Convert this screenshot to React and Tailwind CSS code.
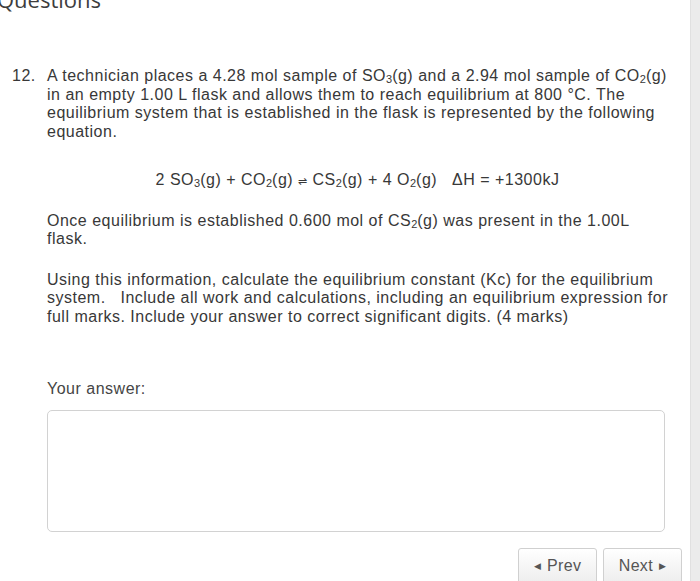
import React from "react";

function Sub({ children }) {
  return <sub className="text-[11px] leading-none relative top-[2px] align-baseline tracking-normal">{children}</sub>;
}

export default function App() {
  return (
    <div className="w-[700px] h-[581px] overflow-hidden bg-white flex font-['Liberation_Sans',Arial,sans-serif] text-[#383838]">
      <div className="flex-1 flex flex-col">
        <h1 className="-mt-[16px] -ml-[3px] font-['Open_Sans',sans-serif] text-[22px] leading-[30px] text-[#3d3d3d]">Questions</h1>
        <div className="mt-[53px] flex text-[16px] leading-[18.5px] tracking-[0.5px]">
          <div className="w-[47px] pl-[12px] shrink-0">12.</div>
          <div className="w-[625px]">
            <div className="whitespace-nowrap">A technician places a 4.28 mol sample of SO<Sub>3</Sub>(g) and a 2.94 mol sample of CO<Sub>2</Sub>(g)</div>
            <div className="whitespace-nowrap">in an empty 1.00 L flask and allows them to reach equilibrium at 800 °C. The</div>
            <div className="whitespace-nowrap">equilibrium system that is established in the flask is represented by the following</div>
            <div>equation.</div>
            <div className="mt-[30px] text-center whitespace-nowrap pr-[4px]">
              2 SO<Sub>3</Sub>(g) + CO<Sub>2</Sub>(g) <span className="text-[11px]">⇌</span> CS<Sub>2</Sub>(g) + 4 O<Sub>2</Sub>(g)&nbsp;&nbsp; ΔH = +1300kJ
            </div>
            <div className="mt-[21px] whitespace-nowrap">Once equilibrium is established 0.600 mol of CS<Sub>2</Sub>(g) was present in the 1.00L</div>
            <div>flask.</div>
            <div className="mt-[22px] whitespace-nowrap">Using this information, calculate the equilibrium constant (Kc) for the equilibrium</div>
            <div className="whitespace-nowrap">system.&nbsp;&nbsp; Include all work and calculations, including an equilibrium expression for</div>
            <div className="whitespace-nowrap">full marks. Include your answer to correct significant digits. (4 marks)</div>
            <div className="mt-[54px] text-[#454545]">Your answer:</div>
            <div className="mt-[11px] w-[618px] h-[122px] border border-[#d2d2d2] rounded-[5px] bg-white"></div>
            <div className="mt-[16px] mr-[-10px] flex justify-end gap-[6px]">
              <button className="w-[79px] h-[38px] border border-[#d0d0d0] rounded-[3px] bg-gradient-to-b from-[#ffffff] to-[#ececec] text-[#555] text-[16px] tracking-[0.3px] flex items-center justify-center gap-[6px]">
                <span className="text-[9px]">◀</span>Prev
              </button>
              <button className="w-[79px] h-[38px] border border-[#d0d0d0] rounded-[3px] bg-gradient-to-b from-[#ffffff] to-[#ececec] text-[#555] text-[16px] tracking-[0.3px] flex items-center justify-center gap-[6px]">
                Next<span className="text-[9px]">▶</span>
              </button>
            </div>
          </div>
        </div>
      </div>
      <div className="w-[10px] bg-[#ebebeb] border-l border-[#e0e0e0]"></div>
    </div>
  );
}
